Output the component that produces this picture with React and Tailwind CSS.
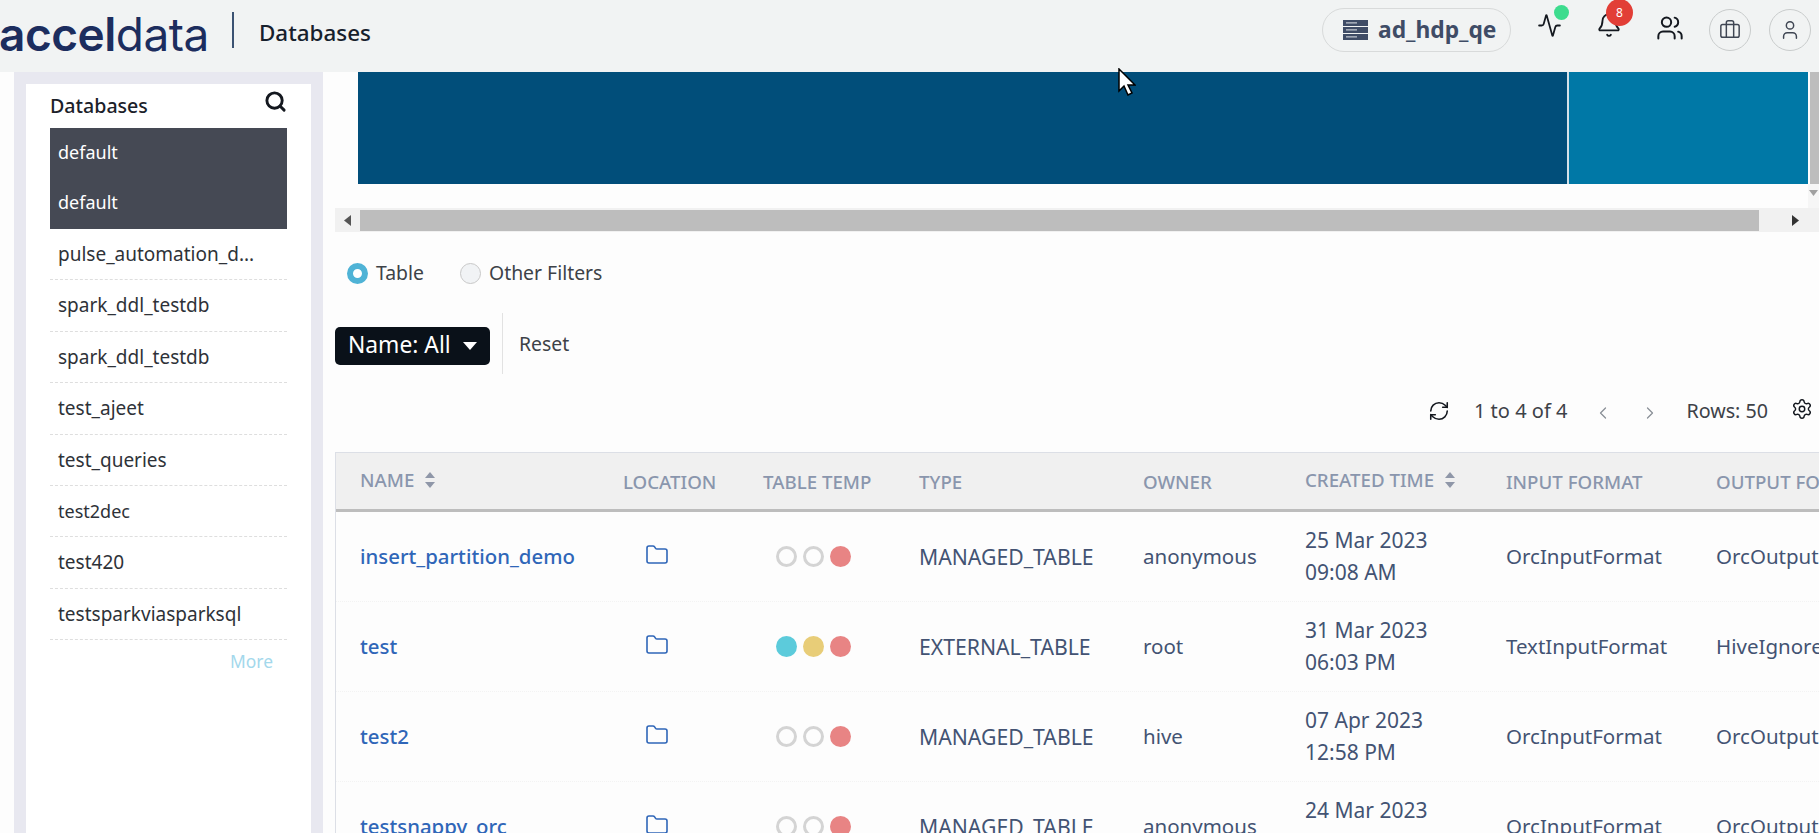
import { Activity, Bell, Users, Briefcase, User, Folder, Search, RefreshCw, Settings, ChevronLeft, ChevronRight } from "lucide-react";

const databases = [
  { name: "pulse_automation_d...", cls: "text-[19px]" },
  { name: "spark_ddl_testdb", cls: "text-[19px]" },
  { name: "spark_ddl_testdb", cls: "text-[19px]" },
  { name: "test_ajeet", cls: "text-[19px]" },
  { name: "test_queries", cls: "text-[19px]" },
  { name: "test2dec", cls: "text-[18px]" },
  { name: "test420", cls: "text-[19px]" },
  { name: "testsparkviasparksql", cls: "text-[19px]" },
];

const rows = [
  { name: "insert_partition_demo", temp: "cold", type: "MANAGED_TABLE", owner: "anonymous", date: "25 Mar 2023", time: "09:08 AM", input: "OrcInputFormat", output: "OrcOutputFormat" },
  { name: "test", temp: "all", type: "EXTERNAL_TABLE", owner: "root", date: "31 Mar 2023", time: "06:03 PM", input: "TextInputFormat", output: "HiveIgnoreKeyText" },
  { name: "test2", temp: "cold", type: "MANAGED_TABLE", owner: "hive", date: "07 Apr 2023", time: "12:58 PM", input: "OrcInputFormat", output: "OrcOutputFormat" },
  { name: "testsnappy_orc", temp: "cold", type: "MANAGED_TABLE", owner: "anonymous", date: "24 Mar 2023", time: "11:20 AM", input: "OrcInputFormat", output: "OrcOutputFormat" },
];

const cols = "grid grid-cols-[287px_140px_156px_224px_162px_201px_210px_300px]";

function SortIcon() {
  return (
    <svg width="12" height="16" viewBox="0 0 12 16" className="ml-[10px] fill-[#8f97a8]">
      <path d="M6 0l5 6H1z" />
      <path d="M6 16l5-6H1z" />
    </svg>
  );
}

function Dot({ color }) {
  if (color) return <span className={"w-[21px] h-[21px] rounded-full " + color} />;
  return <span className="w-[21px] h-[21px] rounded-full border-[3px] border-[#d4d4d4]" />;
}

function Header() {
  return (
    <div className="h-[72px] shrink-0 bg-[#f1f3f3] flex items-center">
      <div className="w-[233px] text-[46px] leading-none -tracking-[0.5px] text-[#1c2d5e] font-['Inter',sans-serif] -mt-[5px] -ml-[1px]">
        <span className="font-semibold">accel</span>
        <span className="font-normal">data</span>
      </div>
      <div className="w-[2px] h-[36px] bg-[#3b5272] -mt-[12px]" />
      <div className="ml-[25px] text-[22.4px] font-medium text-[#16202c] -mt-[7px]">Databases</div>
      <div className="ml-auto flex items-center -mt-[12px]">
        <div className="h-[44px] w-[189px] rounded-full border border-[#d8dada] flex items-center pl-[20px]">
          <svg width="25" height="20" viewBox="0 0 25 20" className="fill-[#3f4c66]">
            <rect width="25" height="6" />
            <rect y="7" width="25" height="6" />
            <rect y="14" width="25" height="6" />
            <rect x="3" y="2.4" width="11" height="1" fill="#dfe3e8" />
            <rect x="3" y="9.4" width="11" height="1" fill="#dfe3e8" />
            <rect x="3" y="16.4" width="11" height="1" fill="#dfe3e8" />
          </svg>
          <span className="ml-[10px] text-[22.8px] font-bold text-[#3f4c66]">ad_hdp_qe</span>
        </div>
        <div className="relative ml-[26px] w-[24px] -mt-[10px]">
          <Activity size={25} strokeWidth={1.7} className="text-[#14181f]" />
          <span className="absolute -top-[8px] left-[17px] w-[15px] h-[15px] rounded-full bg-[#3ddc8e]" />
        </div>
        <div className="relative ml-[35px] w-[24px] -mt-[10px]">
          <Bell size={26} strokeWidth={1.7} className="text-[#14181f]" />
          <span className="absolute -top-[13px] left-[10px] w-[27px] h-[27px] rounded-full bg-[#e23e36] text-white text-[12px] flex items-center justify-center">8</span>
        </div>
        <Users size={28} strokeWidth={1.7} className="ml-[36px] -mt-[4px] text-[#14181f]" />
        <div className="ml-[25px] w-[42px] h-[42px] rounded-full border border-[#c9cccc] flex items-center justify-center">
          <Briefcase size={22} strokeWidth={1.6} className="text-[#3f4653]" />
        </div>
        <div className="ml-[18px] mr-[8px] w-[42px] h-[42px] rounded-full border border-[#c9cccc] flex items-center justify-center">
          <User size={22} strokeWidth={1.6} className="text-[#3f4653]" />
        </div>
      </div>
    </div>
  );
}

function Sidebar() {
  return (
    <div className="ml-[14px] w-[309px] shrink-0 bg-[#e8e8f0] px-[12px] pt-[12px]">
      <div className="h-[800px] bg-white pl-[24px] pr-[24px]">
        <div className="h-[44px] flex items-center justify-between">
          <span className="text-[19.6px] font-medium text-[#1b2129]">Databases</span>
          <Search size={23} strokeWidth={3} className="text-[#14181f] -mt-[9px]" />
        </div>
        <div className="bg-[#454954] text-white text-[18px]">
          <div className="h-[50px] pl-[8px] pb-[2px] flex items-center">default</div>
          <div className="h-[51px] pl-[8px] pb-[2px] flex items-center">default</div>
        </div>
        {databases.map((db, i) => (
          <div key={i} className={"h-[51.4px] pl-[8px] flex items-center text-[#2e3238] border-b border-dashed border-[#dedede] " + db.cls}>
            {db.name}
          </div>
        ))}
        <div className="mt-[8px] pr-[14px] text-right text-[17.4px] text-[#a3d8ec]">More</div>
      </div>
    </div>
  );
}

function Charts() {
  return (
    <div className="relative shrink-0 h-[160px] ml-[12px]">
      <div className="flex h-[112px] pl-[23px]">
        <div className="w-[1209px] bg-[#014e7a]" />
        <div className="w-[2px] bg-[#d5e0e8]" />
        <div className="w-[239px] bg-[#0078a6]" />
        <div className="ml-[2px] w-[9px] bg-[#bdbdbd]" />
      </div>
      <div className="flex justify-end h-[24px]">
        <div className="w-[11px] bg-[#f6f6f6] flex justify-center pt-[6px]">
          <svg width="9" height="6" viewBox="0 0 9 6" className="fill-[#a0a0a0]"><path d="M0 0h9L4.5 6z" /></svg>
        </div>
      </div>
      <div className="h-[24px] bg-[#f1f1f1] flex items-center">
        <div className="w-[25px] flex justify-center">
          <svg width="7" height="11" viewBox="0 0 7 11" className="fill-[#555]"><path d="M7 0v11L0 5.5z" /></svg>
        </div>
        <div className="w-[1399px] h-[21px] bg-[#bdbdbd]" />
        <svg width="7" height="11" viewBox="0 0 7 11" className="ml-[33px] fill-[#333]"><path d="M0 0v11l7-5.5z" /></svg>
      </div>
    </div>
  );
}

function Filters() {
  return (
    <div className="shrink-0 ml-[12px]">
      <div className="h-[82px] pt-[31px] flex items-start text-[19.4px] text-[#3d4248]">
        <div className="ml-[12px] flex items-center h-[20px]">
          <span className="w-[21px] h-[21px] rounded-full border-[6px] border-[#4fb3d6] bg-white" />
          <span className="ml-[8px]">Table</span>
        </div>
        <div className="ml-[36px] flex items-center h-[20px]">
          <span className="w-[21px] h-[21px] rounded-full border border-[#c8c8c8] bg-[#f1f3f5]" />
          <span className="ml-[8px]">Other Filters</span>
        </div>
      </div>
      <div className="flex items-center h-[61px] -mt-[1px]">
        <div className="w-[155px] h-[38px] mt-[4px] rounded-[5px] bg-[#0a1119] text-white text-[22.8px] flex items-center pl-[13px]">
          Name: All
          <svg width="14" height="8" viewBox="0 0 14 8" className="ml-[12px] fill-white"><path d="M0 0h14L7 8z" /></svg>
        </div>
        <div className="ml-[12px] w-px h-[61px] bg-[#e2e2e2]" />
        <span className="ml-[16px] text-[19.4px] text-[#3d4248] mt-[1px]">Reset</span>
      </div>
      <div className="h-[78px] pt-[23px] pr-[6px] flex items-start justify-end">
        <div className="flex items-center h-[28px] text-[#3d4248]">
          <RefreshCw size={22} strokeWidth={1.7} className="text-[#14181f]" />
          <span className="ml-[24px] text-[20px]">1 to 4 of 4</span>
          <ChevronLeft size={20} strokeWidth={1.5} className="ml-[26px] text-[#8a8f96] mt-[4px]" />
          <ChevronRight size={20} strokeWidth={1.5} className="ml-[27px] text-[#8a8f96] mt-[4px]" />
          <span className="ml-[26px] text-[19.7px]">Rows: 50</span>
          <Settings size={22} strokeWidth={1.6} className="ml-[23px] -mt-[4px] text-[#14181f]" />
        </div>
      </div>
    </div>
  );
}

function Table() {
  const head = "text-[18.7px] font-medium text-[#8a96ad] flex items-center";
  return (
    <div className="ml-[12px] w-[1600px] border-l border-t border-[#dcdfe6]">
      <div className={cols + " h-[56px] bg-[#f0f0f0] border-b-[3px] border-[#bdbdbd] box-content"}>
        <div className={head + " pl-[24px] -mt-[2px]"}>NAME<SortIcon /></div>
        <div className={head + " mt-[2px]"}>LOCATION</div>
        <div className={head + " mt-[2px]"}>TABLE TEMP</div>
        <div className={head + " mt-[2px]"}>TYPE</div>
        <div className={head + " mt-[2px]"}>OWNER</div>
        <div className={head + " -mt-[2px]"}>CREATED TIME<SortIcon /></div>
        <div className={head + " mt-[2px]"}>INPUT FORMAT</div>
        <div className={head + " mt-[2px]"}>OUTPUT FORMAT</div>
      </div>
      {rows.map((r) => (
        <div key={r.name} className={cols + " h-[90px] border-b border-dotted border-[#f3f3f3] text-[20.5px] text-[#435373] items-center"}>
          <div className="pl-[24px] font-medium text-[20.4px] text-[#2f66b8]">{r.name}</div>
          <div className="pl-[22px] -mt-[4px]"><Folder size={24} strokeWidth={1.6} className="text-[#2f66b8]" /></div>
          <div className="pl-[13px] flex gap-[6px]">
            <Dot color={r.temp === "all" ? "bg-[#5ccbdb]" : ""} />
            <Dot color={r.temp === "all" ? "bg-[#e8cd78]" : ""} />
            <Dot color="bg-[#e88484]" />
          </div>
          <div className="text-[21.2px]">{r.type}</div>
          <div>{r.owner}</div>
          <div className="text-[21px] leading-[32px] -mt-[2px]">{r.date}<br />{r.time}</div>
          <div>{r.input}</div>
          <div>{r.output}</div>
        </div>
      ))}
    </div>
  );
}

export default function App() {
  return (
    <div className="relative h-screen overflow-hidden bg-[#fdfdfd] flex flex-col font-['Noto_Sans',sans-serif]">
      <Header />
      <div className="flex flex-1 min-h-0">
        <Sidebar />
        <div className="flex-1 min-w-0 flex flex-col">
          <Charts />
          <Filters />
          <Table />
        </div>
      </div>
      <svg width="18" height="28" viewBox="0 0 18 28" className="absolute left-[1118px] top-[68px]">
        <path d="M1 1v22l5-5 4 9 4-2-4-8h7z" fill="#fff" stroke="#000" strokeWidth="1.5" />
      </svg>
    </div>
  );
}
